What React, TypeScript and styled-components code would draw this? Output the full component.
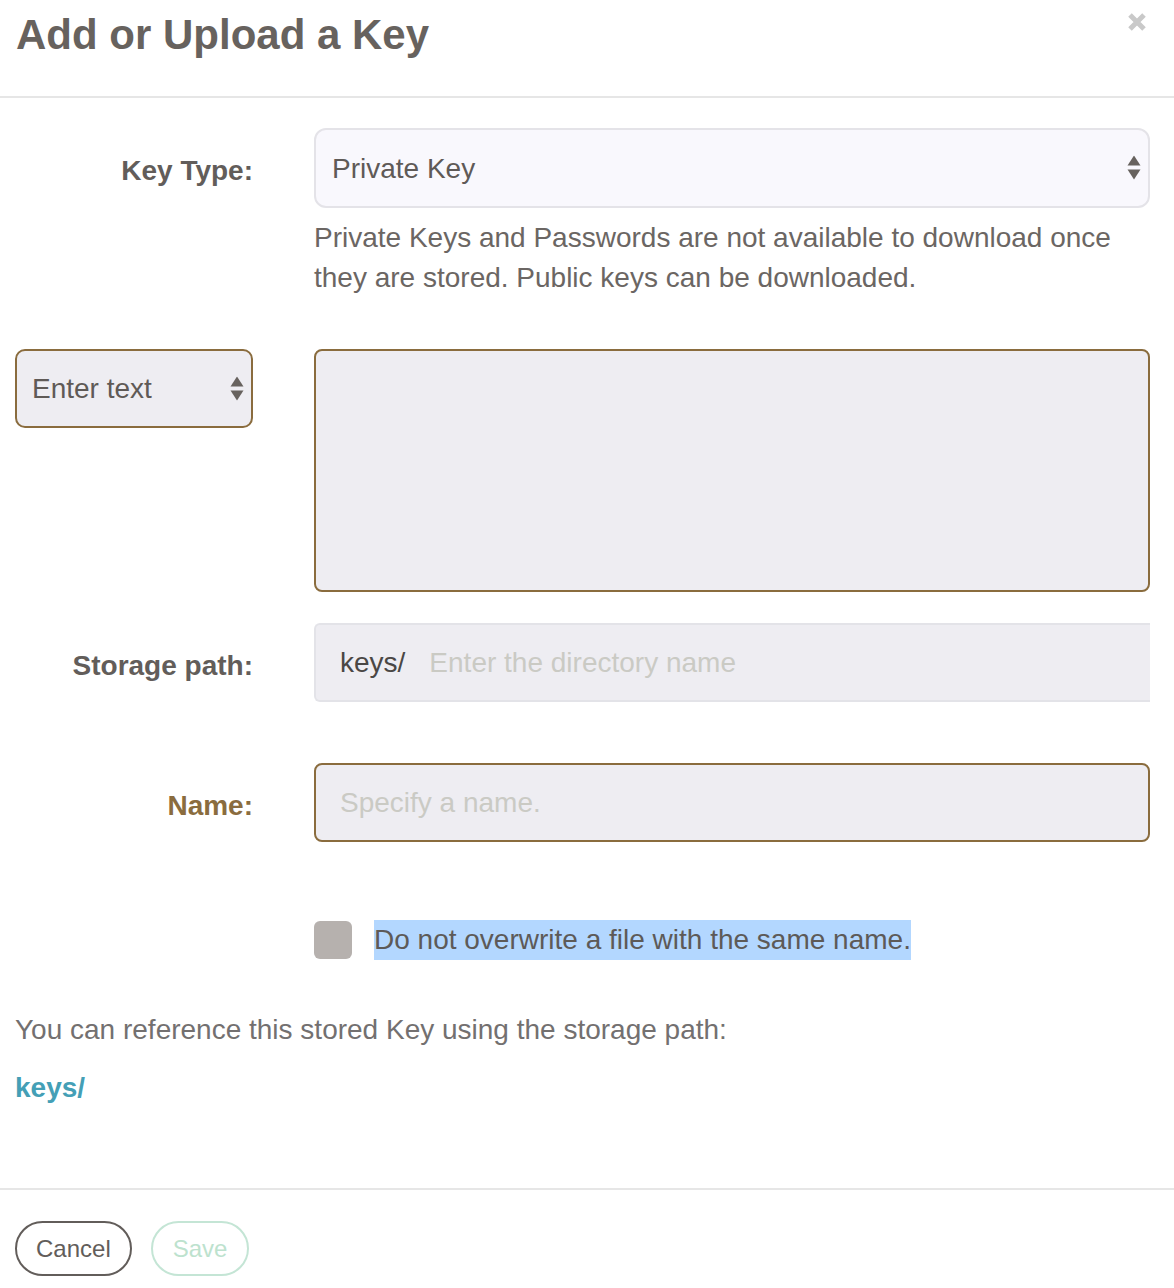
import React from 'react';
import styled, { createGlobalStyle } from 'styled-components';

const GlobalStyle = createGlobalStyle`
  html, body {
    margin: 0;
    padding: 0;
    background: #fff;
  }
  body {
    font-family: 'Liberation Sans', Arial, sans-serif;
    color: #625d5a;
  }
`;

const Modal = styled.div`
  width: 1174px;
  background: #fff;
`;

const Header = styled.div`
  position: relative;
  height: 96px;
  padding: 0 16px;
  border-bottom: 2px solid #e6e6e6;
`;

const Title = styled.h1`
  margin: 0;
  padding-top: 14px;
  font-size: 42px;
  line-height: 42px;
  font-weight: 700;
  color: #67625e;
`;

const Close = styled.button`
  position: absolute;
  top: 12px;
  right: 27px;
  width: 20px;
  height: 20px;
  padding: 0;
  border: 0;
  background: none;
  cursor: pointer;
`;

const Body = styled.div`
  padding: 30px 24px 0 15px;
`;

const Row = styled.div<{ top?: number }>`
  display: grid;
  grid-template-columns: 238px 836px;
  column-gap: 61px;
  align-items: start;
  margin-top: ${(p) => p.top || 0}px;
`;

const Label = styled.label<{ accent?: boolean }>`
  justify-self: end;
  font-size: 28px;
  font-weight: 700;
  line-height: 72px;
  padding-top: 7px;
  color: ${(p) => (p.accent ? '#8a6c3e' : '#625d5a')};
`;

const Field = styled.div`
  display: flex;
  flex-direction: column;
`;

const SelectWrap = styled.div`
  position: relative;
`;

const Select = styled.select<{ tone: 'light' | 'brown' }>`
  appearance: none;
  -webkit-appearance: none;
  display: block;
  width: 100%;
  height: ${(p) => (p.tone === 'light' ? 80 : 79)}px;
  padding: 0 40px 0 ${(p) => (p.tone === 'light' ? 16 : 15)}px;
  font-family: 'Liberation Sans', Arial, sans-serif;
  font-size: 28px;
  color: #5f5a57;
  background: ${(p) => (p.tone === 'light' ? '#f9f8fd' : '#eeedf2')};
  border: ${(p) => (p.tone === 'light' ? '2px solid #e4e3e8' : '2px solid #8a6c3e')};
  border-radius: ${(p) => (p.tone === 'light' ? 12 : 10)}px;
  outline: none;
`;

const Arrows = styled.svg`
  position: absolute;
  right: 9px;
  top: 50%;
  transform: translateY(-50%);
  pointer-events: none;
`;

const Help = styled.p`
  margin: 10px 0 0;
  font-size: 28px;
  line-height: 40px;
  color: #6b6663;
`;

const TextArea = styled.textarea`
  display: block;
  box-sizing: border-box;
  width: 100%;
  height: 243px;
  resize: none;
  background: #eeedf2;
  border: 2px solid #8a6c3e;
  border-radius: 8px;
  outline: none;
`;

const PathBox = styled.div`
  display: flex;
  align-items: center;
  box-sizing: border-box;
  height: 79px;
  padding-left: 24px;
  background: #eeedf2;
  border: 2px solid #e3e3e8;
  border-right: 0;
  border-radius: 6px 0 0 6px;
`;

const Prefix = styled.span`
  font-size: 28px;
  color: #4a4745;
  margin-right: 24px;
`;

const TextInput = styled.input<{ bordered?: boolean }>`
  box-sizing: border-box;
  flex: 1;
  width: 100%;
  height: ${(p) => (p.bordered ? '79px' : 'auto')};
  padding: ${(p) => (p.bordered ? '0 24px' : '0')};
  font-family: 'Liberation Sans', Arial, sans-serif;
  font-size: 28px;
  color: #4a4745;
  background: ${(p) => (p.bordered ? '#eeedf2' : 'transparent')};
  border: ${(p) => (p.bordered ? '2px solid #8a6c3e' : '0')};
  border-radius: 8px;
  outline: none;
  &::placeholder {
    color: #cacac4;
  }
`;

const CheckRow = styled.div`
  display: flex;
  align-items: center;
  gap: 22px;
`;

const CheckBox = styled.span`
  width: 38px;
  height: 38px;
  border-radius: 6px;
  background: #b6b1ae;
`;

const CheckText = styled.span`
  font-size: 28px;
  line-height: 40px;
  color: #5d5a58;
  background: #b3d7ff;
`;

const Note = styled.p`
  margin: 50px 0 0;
  font-size: 28px;
  line-height: 40px;
  color: #737070;
`;

const PathLink = styled.p`
  margin: 18px 0 0;
  font-size: 28px;
  line-height: 40px;
  font-weight: 700;
  color: #449fb6;
`;

const Footer = styled.div`
  margin-top: 80px;
  border-top: 2px solid #e6e6e6;
  padding: 31px 15px 12px;
  display: flex;
  gap: 19px;
`;

const Button = styled.button<{ variant: 'default' | 'save' }>`
  height: 55px;
  padding: 0 ${(p) => (p.variant === 'save' ? 20 : 19)}px;
  border-radius: 28px;
  background: #fff;
  font-family: 'Liberation Sans', Arial, sans-serif;
  font-size: 24px;
  border: 2px solid ${(p) => (p.variant === 'save' ? '#c4e5d5' : '#625d5a')};
  color: ${(p) => (p.variant === 'save' ? '#bde2ce' : '#625d5a')};
`;

function UpDown() {
  return (
    <Arrows width="14" height="25" viewBox="0 0 14 25">
      <path d="M7 0 L13.5 10 L0.5 10 Z" fill="#67625e" />
      <path d="M0.5 14 L13.5 14 L7 24 Z" fill="#67625e" />
    </Arrows>
  );
}

export default function App() {
  return (
    <>
      <GlobalStyle />
      <Modal>
        <Header>
          <Title>Add or Upload a Key</Title>
          <Close aria-label="Close">
            <svg width="20" height="20" viewBox="0 0 20 20">
              <path d="M3 3 L17 17 M17 3 L3 17" stroke="#c9c9c9" strokeWidth="5" />
            </svg>
          </Close>
        </Header>
        <Body>
          <Row>
            <Label>Key Type:</Label>
            <Field>
              <SelectWrap>
                <Select tone="light" defaultValue="private">
                  <option value="private">Private Key</option>
                  <option value="public">Public Key</option>
                  <option value="password">Password</option>
                </Select>
                <UpDown />
              </SelectWrap>
              <Help>
                Private Keys and Passwords are not available to download once they are stored. Public
                keys can be downloaded.
              </Help>
            </Field>
          </Row>

          <Row top={51}>
            <SelectWrap>
              <Select tone="brown" defaultValue="text">
                <option value="text">Enter text</option>
                <option value="upload">Upload file</option>
              </Select>
              <UpDown />
            </SelectWrap>
            <TextArea />
          </Row>

          <Row top={31}>
            <Label>Storage path:</Label>
            <PathBox>
              <Prefix>keys/</Prefix>
              <TextInput placeholder="Enter the directory name" />
            </PathBox>
          </Row>

          <Row top={61}>
            <Label accent>Name:</Label>
            <TextInput bordered placeholder="Specify a name." />
          </Row>

          <Row top={78}>
            <span />
            <CheckRow>
              <CheckBox />
              <CheckText>Do not overwrite a file with the same name.</CheckText>
            </CheckRow>
          </Row>

          <Note>You can reference this stored Key using the storage path:</Note>
          <PathLink>keys/</PathLink>
        </Body>
        <Footer>
          <Button variant="default">Cancel</Button>
          <Button variant="save">Save</Button>
        </Footer>
      </Modal>
    </>
  );
}
